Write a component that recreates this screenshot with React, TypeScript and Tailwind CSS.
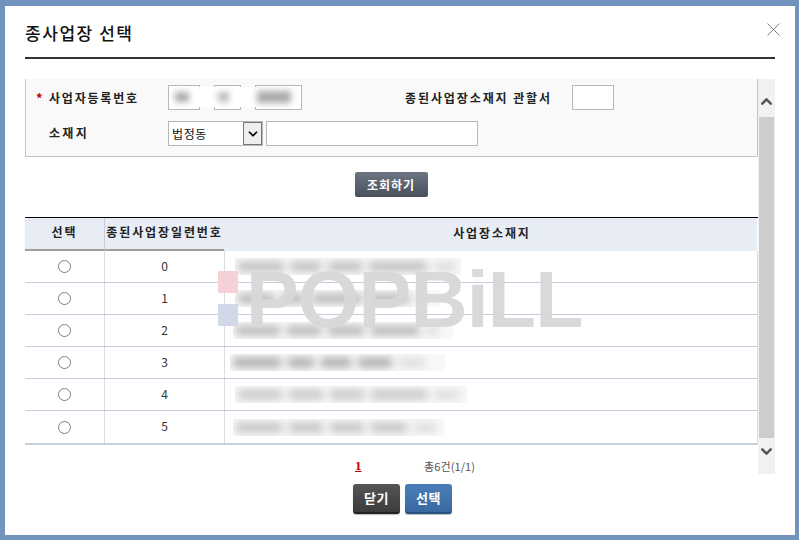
import { ChevronDown, ChevronUp } from "lucide-react";

const fontStack = "font-['Noto_Sans_CJK_KR','Liberation_Sans',sans-serif]";

const smudges = [
  { width: 226, ml: 10, pieces: [46, 30, 34, 58, 22], dark: "bg-[#bcbcbc]" },
  { width: 205, ml: 10, pieces: [36, 24, 50, 40, 10], dark: "bg-[#b4b4b4]" },
  { width: 220, ml: 8, pieces: [44, 34, 36, 48, 12], dark: "bg-[#b4b4b4]" },
  { width: 215, ml: 5, pieces: [48, 26, 30, 34, 26], dark: "bg-[#a8a8a8]" },
  { width: 232, ml: 10, pieces: [44, 34, 34, 56, 26], dark: "bg-[#c4c4c4]" },
  { width: 212, ml: 8, pieces: [46, 34, 34, 36, 22], dark: "bg-[#c0c0c0]" },
];

function Smudge({ row }: { row: (typeof smudges)[number] }) {
  return (
    <div className="flex h-[17px] items-center gap-[7px] overflow-hidden bg-[#f8f8f8] pl-[3px]" style={{ width: row.width, marginLeft: row.ml }}>
      {row.pieces.map((w, i) => (
        <div key={i} className={`h-[9px] shrink-0 blur-[4px] ${i === 4 ? "bg-[#dcdcdc]" : row.dark}`} style={{ width: w }} />
      ))}
    </div>
  );
}

function FieldBox({ className }: { className: string }) {
  return <div className={`h-[25px] shrink-0 border border-[#b8b8b8] bg-white ${className}`} />;
}

export default function App() {
  return (
    <div className={`relative box-border h-[540px] w-[799px] overflow-hidden border-b-[5px] border-l-[5px] border-r-[4px] border-t-[6px] border-[#7094bd] bg-white pl-[20px] pr-[20px] text-[#222] ${fontStack}`}>
      {/* title */}
      <div className="flex h-[53px] items-center border-b-2 border-[#333] pt-[2px]">
        <h1 className="text-[17px] font-medium tracking-[1.55px] text-[#111]">종사업장 선택</h1>
      </div>
      <svg className="absolute right-[15px] top-[17px] h-[13px] w-[13px]" viewBox="0 0 13 13" fill="none" stroke="#5a6270" strokeWidth="0.8">
        <path d="M0.5 0.5 12.5 12.5M12.5 0.5 0.5 12.5" />
      </svg>

      <div className="mt-[20px] flex h-[395px]">
        {/* scrolled content */}
        <div className="w-[733px] shrink-0">
          <div className="h-[78px] border-x border-b border-[#c4c4c4] bg-[#f9f9f9] pt-[6px] text-[12px] font-bold">
            <div className="flex items-center">
              <span className="ml-[10px] w-[13px] text-[13px] leading-none text-[#c00000]">*</span>
              <span className="w-[119px] tracking-[1.8px]">사업자등록번호</span>
              <FieldBox className="w-[32px]" />
              <FieldBox className="ml-[14px] w-[27px]" />
              <FieldBox className="ml-[14px] w-[47px]" />
              <span className="ml-[103px] w-[167px] whitespace-nowrap tracking-[1.9px]">종된사업장소재지 관할서</span>
              <FieldBox className="w-[42px]" />
            </div>
            <div className="mt-[11px] flex items-center">
              <span className="ml-[23px] w-[119px] pb-[2px] tracking-[2.3px]">소재지</span>
              <div className="flex h-[25px] w-[95px] shrink-0 items-center justify-between border border-[#b8b8b8] bg-white pl-[3px]">
                <span className="text-[12px] font-normal tracking-[0.6px] text-[#111]">법정동</span>
                <div className="flex h-[23px] w-[19px] items-center justify-center border border-[#777] bg-[#eeeeee]">
                  <ChevronDown className="h-[14px] w-[14px] text-black" strokeWidth={3} aria-hidden />
                </div>
              </div>
              <FieldBox className="ml-[3px] w-[212px]" />
            </div>
          </div>

          <div className="mt-[15px] flex justify-center pr-[1px]">
            <button className="h-[25px] w-[73px] rounded-[2px] bg-gradient-to-b from-[#6d7583] to-[#4a505c] text-[12px] font-bold tracking-[0.9px] text-white">
              조회하기
            </button>
          </div>

          {/* table */}
          <div className="relative mt-[20px] border-t border-black text-[12px]">
            <div className="mr-[1px] flex h-[33px] items-center bg-[#e8ecf5] font-bold tracking-[1.9px] text-[#222]">
              <div className="flex h-full w-[79px] items-center justify-center border-b-2 border-[#a0a0a0] pb-[3px]">선택</div>
              <div className="flex h-full w-[120px] items-center justify-center whitespace-nowrap border-b-2 border-l border-[#a0a0a0] border-l-[#c6cdd9] pb-[3px]">종된사업장일련번호</div>
              <div className="flex h-full flex-1 items-center justify-center pb-[3px] pl-[3px]">사업장소재지</div>
            </div>
            {smudges.map((row, i) => (
              <div key={i} className={`flex h-[32px] border-r border-r-[#dddddd] ${i === 5 ? "box-content border-b-2 border-b-[#c5d0e0]" : "border-b border-b-[#c2cedf]"}`}>
                <div className="flex w-[79px] items-center justify-center">
                  <input type="radio" name="pick" readOnly className="h-[13px] w-[13px] appearance-none rounded-full border border-[#808080] bg-white" />
                </div>
                <div className="flex w-[120px] items-center justify-center border-l border-[#dddddd] pb-[2px] text-[#333]">{i}</div>
                <div className="flex flex-1 items-center border-l border-[#dddddd]">
                  <Smudge row={row} />
                </div>
              </div>
            ))}
          </div>

          {/* paging */}
          <div className="relative mt-[11px] flex h-[20px] items-center">
            <span className="ml-[330px] w-[69px] font-['Liberation_Serif',serif] text-[13px] font-bold text-[#c00000] underline">1</span>
            <span className="text-[11px] tracking-[0.1px] text-[#555]">총6건(1/1)</span>
          </div>
        </div>

        {/* scrollbar */}
        <div className="flex w-[17px] shrink-0 flex-col items-center bg-[#f1f1f1]">
          <div className="flex h-[38px] w-full items-center justify-center pt-[6px]">
            <ChevronUp className="h-[17px] w-[17px] text-[#555]" strokeWidth={3.5} aria-hidden />
          </div>
          <div className="h-[321px] w-[15px] bg-[#cdcdcd]" />
          <div className="flex flex-1 items-center justify-center pb-[10px]">
            <ChevronDown className="h-[17px] w-[17px] text-[#555]" strokeWidth={3.5} aria-hidden />
          </div>
        </div>
      </div>

      {/* footer buttons */}
      <div className="mt-[10px] flex justify-center gap-[5px] pl-[5px]">
        <button className="h-[30px] w-[47px] rounded-[3px] border-b-2 border-[#222] bg-gradient-to-b from-[#555555] to-[#3c3c3c] text-[13px] font-bold tracking-[0.5px] text-white shadow-[0_1px_1px_#bbb]">
          닫기
        </button>
        <button className="h-[30px] w-[47px] rounded-[3px] border-b-2 border-[#27517f] bg-gradient-to-b from-[#4a7db8] to-[#39699f] text-[13px] font-bold tracking-[0.5px] text-white shadow-[0_1px_1px_#bbb]">
          선택
        </button>
      </div>

      {/* blur patch over the business number */}
      <div className="pointer-events-none absolute left-[168px] top-[81px] flex h-[20px] w-[118px] items-center bg-white">
        <div className="ml-[2px] h-[10px] w-[14px] bg-[#aaa] blur-[3px]" />
        <div className="ml-[29px] h-[10px] w-[11px] bg-[#bbb] blur-[3px]" />
        <div className="ml-[28px] h-[12px] w-[34px] bg-[#aaa] blur-[3px]" />
      </div>

      {/* watermark */}
      <div className="pointer-events-none absolute left-[213px] top-[265px] h-[22px] w-[20px] bg-[#f5d0d6]" />
      <div className="pointer-events-none absolute left-[213px] top-[298px] h-[22px] w-[20px] bg-[#d3d8e8]" />
      <div className="pointer-events-none absolute left-[241px] top-[248px] whitespace-nowrap font-['Liberation_Sans',sans-serif] text-[79px] font-bold leading-[92px] tracking-[-0.8px] text-[#d8d8d8] opacity-95">
        POPBiLL
      </div>
    </div>
  );
}
